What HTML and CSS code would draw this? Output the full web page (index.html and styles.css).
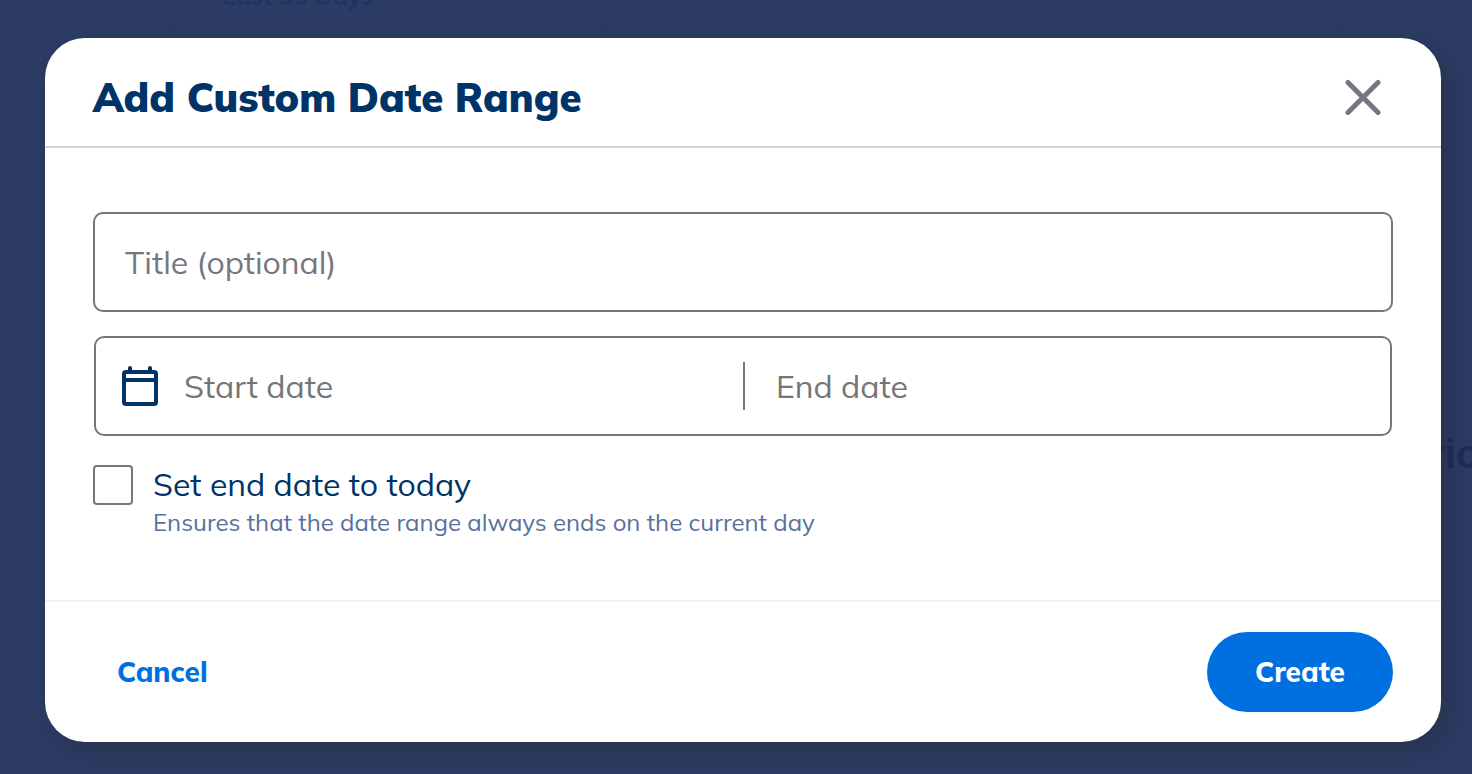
FILE: index.html
```html
<!DOCTYPE html>
<html lang="en">
<head>
    <meta charset="UTF-8">
    <meta name="viewport" content="width=device-width, initial-scale=1.0">
    <title>Add Custom Date Range</title>
    <link rel="stylesheet" href="styles.css">
</head>
<body>
    <div class="page">
        <div class="page-toolbar">
            <div class="page-filter">Last 30 Days</div>
        </div>
        <div class="page-heading">Prior</div>
    </div>

    <div class="overlay">
        <form class="modal" role="dialog" aria-labelledby="modal-title">
            <header class="modal-header">
                <h1 id="modal-title">Add Custom Date Range</h1>
                <button type="button" class="btn-close" aria-label="Close">
                    <svg width="36" height="36" viewBox="0 0 36 36" fill="none" stroke="currentColor" stroke-width="5" stroke-linecap="round">
                        <path d="M3 3.5L33 33.5M33 3.5L3 33.5"/>
                    </svg>
                </button>
            </header>

            <div class="modal-body">
                <input type="text" class="title-input" placeholder="Title (optional)" aria-label="Title (optional)">
                <div class="date-range">
                    <div class="date-start">
                        <svg class="calendar-icon" width="36" height="40" viewBox="0 0 36 40" fill="none" stroke="currentColor" stroke-width="4">
                            <rect x="2" y="6" width="32" height="32" rx="2"/>
                            <path d="M2 14H34"/>
                            <path d="M8 2V6M28 2V6" stroke-linecap="round"/>
                        </svg>
                        <input type="text" class="date-input" placeholder="Start date" aria-label="Start date">
                    </div>
                    <div class="date-end">
                        <input type="text" class="date-input" placeholder="End date" aria-label="End date">
                    </div>
                </div>
                <div class="check-row">
                    <input type="checkbox" id="end-today" aria-describedby="end-today-hint">
                    <div class="check-text">
                        <label for="end-today">Set end date to today</label>
                        <p id="end-today-hint">Ensures that the date range always ends on the current day</p>
                    </div>
                </div>
            </div>

            <footer class="modal-footer">
                <button type="button" class="btn btn-cancel">Cancel</button>
                <button type="submit" class="btn btn-create">Create</button>
            </footer>
        </form>
    </div>
</body>
</html>
```
FILE: styles.css
```css
* { box-sizing: border-box; }
body { margin: 0; min-height: 100vh; background-color: #2c3c64; color: #003468; font-family: Mulish, Muli, Lato, sans-serif; overflow: hidden; }
button, input { font-family: inherit; }

/* dimmed page behind the dialog */
.page { position: absolute; inset: 0; overflow: hidden; }
.page-toolbar { display: flex; height: 160px; margin-left: 172px; margin-right: 130px; border-left: 2px solid #293961; border-right: 2px solid #293961; }
.page-filter { width: 432px; padding-left: 48px; border-right: 2px solid #293961; color: #1f3564; font-size: 24px; font-weight: 800; line-height: 32px; margin-top: -20px; }
.page-heading { position: absolute; right: -24px; top: 428px; color: #1c2d57; font-family: "Liberation Sans", sans-serif; font-size: 40px; font-weight: 700; line-height: 52px; }

.overlay { position: relative; display: flex; align-items: flex-start; padding: 38px 31px 32px 45px; }
.modal { width: 100%; background-color: #fff; border-radius: 40px; box-shadow: 8px 8px 24px rgba(33,37,41,0.4); }

.modal-header { display: flex; align-items: center; justify-content: space-between; height: 110px; padding: 10px 60px 0 48px; border-bottom: 2px solid #d0d1d8; }
.modal-header h1 { margin: 0; font-size: 40px; font-weight: 900; line-height: 52px; }
.btn-close { display: flex; padding: 0; border: none; background: none; color: #74777f; cursor: pointer; }

.modal-body { padding: 64px 48px 59px; }
.title-input { display: block; width: 100%; height: 100px; padding: 0 30px; border: 2px solid #74777f; border-radius: 10px; background-color: #fff; color: #003468; font-size: 32px; }
.title-input::placeholder { color: #74777f; opacity: 1; }
.date-range { display: grid; grid-template-columns: 1fr 1fr; align-items: center; height: 100px; margin: 24px 1px 0; border: 2px solid #74777f; border-radius: 10px; }
.date-start, .date-end { display: flex; align-items: center; height: 48px; }
.date-start { padding-left: 26px; }
.date-end { padding-left: 5px; border-left: 2px solid #74777f; }
.calendar-icon { flex: none; }
.date-input { flex: 1; min-width: 0; height: 48px; padding: 0 26px; border: none; background: none; color: #003468; font-size: 32px; }
.date-input::placeholder { color: #757575; opacity: 1; }

.check-row { display: flex; align-items: flex-start; gap: 20px; margin-top: 29px; }
.check-row input { flex: none; appearance: none; width: 40px; height: 40px; margin: 0; border: 2px solid #74777f; border-radius: 4px; background-color: #fff; }
.check-row input:checked { background-color: #0070e0; }
.check-text label { display: block; font-size: 32px; line-height: 38px; }
.check-text p { margin: 0; color: #57719e; font-size: 24px; line-height: 38px; }

.modal-footer { display: flex; align-items: center; justify-content: space-between; padding: 30px 48px; border-top: 2px solid #f1f2f3; }
.btn { height: 80px; border: none; border-radius: 40px; font-size: 28px; font-weight: 800; cursor: pointer; }
.btn-cancel { padding: 0 24px 2px; background: none; color: #0070e0; }
.btn-create { padding: 0 48px 2px; background-color: #0070e0; color: #fff; }
```
